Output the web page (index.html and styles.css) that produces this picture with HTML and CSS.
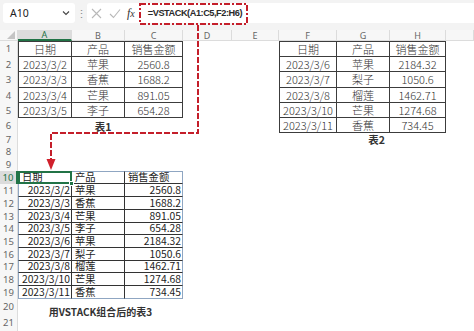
FILE: index.html
```html
<!DOCTYPE html>
<html lang="zh">
<head>
<meta charset="utf-8">
<title>VSTACK</title>
<link rel="stylesheet" href="styles.css">
</head>
<body>
<div class="app">
  <div class="fbar">
    <div class="namebox"><span>A10</span>
      <svg width="8" height="6" viewBox="0 0 8 6"><path d="M1 1.5 L4 4.5 L7 1.5" fill="none" stroke="#444" stroke-width="1.1"/></svg>
    </div>
    <div class="dots">⋮</div>
    <div class="fwrap">
      <svg class="ico" width="11" height="11" viewBox="0 0 11 11"><path d="M1 1 L10 10 M10 1 L1 10" stroke="#b8b8b8" stroke-width="1.1" fill="none"/></svg>
      <svg class="ico" width="12" height="11" viewBox="0 0 12 11"><path d="M1 6 L4.5 9.5 L11 1.5" stroke="#b8b8b8" stroke-width="1.1" fill="none"/></svg>
      <span class="fx">f<span class="fxx">x</span></span>
      <span class="ftext">=VSTACK(A1:C5,F2:H6)</span>
    </div>
  </div>

  <div class="sheet">
    <!-- header row -->
    <span class="corner"><svg width="8" height="8" viewBox="0 0 8 8"><path d="M8 0 V8 H0 Z" fill="#c4c4c4"/></svg></span>
    <span class="ch on">A</span><span class="ch">B</span><span class="ch">C</span><span class="ch">D</span><span class="ch">E</span><span class="ch">F</span><span class="ch">G</span><span class="ch">H</span><span class="ch"></span>

    <!-- row 1 -->
    <span class="rh">1</span>
    <span class="c t top left">日期</span><span class="c t top">产品</span><span class="c t top">销售金额</span>
    <span></span><span></span>
    <span class="c t top left">日期</span><span class="c t top">产品</span><span class="c t top">销售金额</span><span></span>
    <!-- row 2 -->
    <span class="rh">2</span>
    <span class="c t left">2023/3/2</span><span class="c t">苹果</span><span class="c t">2560.8</span>
    <span></span><span></span>
    <span class="c t left">2023/3/6</span><span class="c t">苹果</span><span class="c t">2184.32</span><span></span>
    <!-- row 3 -->
    <span class="rh">3</span>
    <span class="c t left">2023/3/3</span><span class="c t">香蕉</span><span class="c t">1688.2</span>
    <span></span><span></span>
    <span class="c t left">2023/3/7</span><span class="c t">梨子</span><span class="c t">1050.6</span><span></span>
    <!-- row 4 -->
    <span class="rh">4</span>
    <span class="c t left">2023/3/4</span><span class="c t">芒果</span><span class="c t">891.05</span>
    <span></span><span></span>
    <span class="c t left">2023/3/8</span><span class="c t">榴莲</span><span class="c t">1462.71</span><span></span>
    <!-- row 5 -->
    <span class="rh">5</span>
    <span class="c t left">2023/3/5</span><span class="c t">李子</span><span class="c t">654.28</span>
    <span></span><span></span>
    <span class="c t left">2023/3/10</span><span class="c t">芒果</span><span class="c t">1274.68</span><span></span>
    <!-- row 6 -->
    <span class="rh">6</span>
    <span class="cap cap1">表1</span>
    <span></span><span></span>
    <span class="c t left">2023/3/11</span><span class="c t">香蕉</span><span class="c t">734.45</span><span></span>
    <!-- row 7 -->
    <span class="rh">7</span>
    <span></span><span></span><span></span><span></span><span></span>
    <span class="cap cap2">表2</span><span></span>
    <!-- row 8 -->
    <span class="rh">8</span>
    <span></span><span></span><span></span><span></span><span></span><span></span><span></span><span></span><span></span>
    <!-- row 9 -->
    <span class="rh">9</span>
    <span></span><span></span><span></span><span></span><span></span><span></span><span></span><span></span><span></span>
    <!-- row 10 -->
    <span class="rh on">10</span>
    <span class="c u top left l a10">日期<span class="sel"><span class="handle"></span></span></span><span class="c u top l">产品</span><span class="c u top right l">销售金额</span>
    <span></span><span></span><span></span><span></span><span></span><span></span>
    <!-- row 11 -->
    <span class="rh">11</span>
    <span class="c u left r">2023/3/2</span><span class="c u l">苹果</span><span class="c u right r">2560.8</span>
    <span></span><span></span><span></span><span></span><span></span><span></span>
    <!-- row 12 -->
    <span class="rh">12</span>
    <span class="c u left r">2023/3/3</span><span class="c u l">香蕉</span><span class="c u right r">1688.2</span>
    <span></span><span></span><span></span><span></span><span></span><span></span>
    <!-- row 13 -->
    <span class="rh">13</span>
    <span class="c u left r">2023/3/4</span><span class="c u l">芒果</span><span class="c u right r">891.05</span>
    <span></span><span></span><span></span><span></span><span></span><span></span>
    <!-- row 14 -->
    <span class="rh">14</span>
    <span class="c u left r">2023/3/5</span><span class="c u l">李子</span><span class="c u right r">654.28</span>
    <span></span><span></span><span></span><span></span><span></span><span></span>
    <!-- row 15 -->
    <span class="rh">15</span>
    <span class="c u left r">2023/3/6</span><span class="c u l">苹果</span><span class="c u right r">2184.32</span>
    <span></span><span></span><span></span><span></span><span></span><span></span>
    <!-- row 16 -->
    <span class="rh">16</span>
    <span class="c u left r">2023/3/7</span><span class="c u l">梨子</span><span class="c u right r">1050.6</span>
    <span></span><span></span><span></span><span></span><span></span><span></span>
    <!-- row 17 -->
    <span class="rh">17</span>
    <span class="c u left r">2023/3/8</span><span class="c u l">榴莲</span><span class="c u right r">1462.71</span>
    <span></span><span></span><span></span><span></span><span></span><span></span>
    <!-- row 18 -->
    <span class="rh">18</span>
    <span class="c u left r">2023/3/10</span><span class="c u l">芒果</span><span class="c u right r">1274.68</span>
    <span></span><span></span><span></span><span></span><span></span><span></span>
    <!-- row 19 -->
    <span class="rh">19</span>
    <span class="c u left bot r">2023/3/11</span><span class="c u bot l">香蕉</span><span class="c u right bot r">734.45</span>
    <span></span><span></span><span></span><span></span><span></span><span></span>
    <!-- row 20 -->
    <span class="rh">20</span>
    <span class="cap cap3">用VSTACK组合后的表3</span>
    <span></span><span></span><span></span><span></span><span></span><span></span>
    <!-- row 21 -->
    <span class="rh">21</span>
    <span></span><span></span><span></span><span></span><span></span><span></span><span></span><span></span><span></span>
  </div>

  <svg class="annot" width="474" height="331" viewBox="0 0 474 331">
    <rect x="140" y="4" width="107" height="20" fill="none" stroke="#c41e2a" stroke-width="2" stroke-dasharray="6 2 2 2"/>
    <path d="M198 25 V133 H51 V159" fill="none" stroke="#c41e2a" stroke-width="2" stroke-dasharray="6 2"/>
    <polygon points="46.5,159 55.5,159 51,170" fill="#d0202c"/>
  </svg>
</div>
</body>
</html>
```
FILE: styles.css
```css
html, body {
  margin: 0;
  padding: 0;
  background: #ffffff;
}

.app {
  position: relative;
  width: 474px;
  height: 331px;
  overflow: hidden;
  font-family: "Noto Sans CJK SC", "Noto Sans", sans-serif;
  color: #333;
}

/* formula bar */
.fbar {
  height: 30px;
  box-sizing: border-box;
  background: #f3f3f3;
  display: flex;
  align-items: flex-start;
  padding: 3px 0 0 3px;
}

.namebox {
  width: 72px;
  height: 20px;
  box-sizing: border-box;
  background: #fff;
  border-radius: 3px;
  display: flex;
  align-items: center;
  justify-content: space-between;
  padding: 0 5px 0 7px;
  font-family: "Noto Sans", sans-serif;
  font-size: 10.5px;
  color: #222;
}

.dots {
  width: 12px;
  height: 20px;
  line-height: 20px;
  text-align: center;
  color: #8a8a8a;
  font-size: 11px;
}

.fwrap {
  flex: 1;
  height: 20px;
  background: #fff;
  border-radius: 3px 0 0 3px;
  display: flex;
  align-items: center;
  padding-left: 3px;
}

.ico {
  margin-left: 1px;
  margin-right: 6px;
}

.fx {
  font-family: "Liberation Serif", serif;
  font-style: italic;
  font-size: 12px;
  color: #333;
  margin-left: 0;
}

.fxx {
  font-size: 10px;
}

.ftext {
  margin-left: 13px;
  font-family: "Liberation Sans", sans-serif;
  font-size: 9.2px;
  font-weight: 700;
  color: #2a2a2a;
  letter-spacing: -0.45px;
}

/* sheet grid */
.sheet {
  display: grid;
  grid-template-columns: 18px 54px 53px 58px 49px 47px 58px 53px 56px 28px;
  grid-template-rows: 11px 16px 15px 16px 15px 15px 15px 13px 12px 13px 13px 13px 13px 13px 12px 13px 13px 12px 13px 13px 16px 16px;
  font-size: 11px;
}

.sheet > span {
  box-sizing: border-box;
  min-width: 0;
}

.corner {
  background: #f7f7f7;
  border-right: 1px solid #dcdcdc;
  border-bottom: 1px solid #dcdcdc;
  display: flex;
  align-items: flex-end;
  justify-content: flex-end;
  padding: 0 2px 1px 0;
}

.ch {
  background: #f7f7f7;
  border-right: 1px solid #dcdcdc;
  border-bottom: 1px solid #dcdcdc;
  font-family: "Noto Sans", sans-serif;
  font-size: 9px;
  color: #666;
  display: flex;
  align-items: center;
  justify-content: center;
  line-height: 1;
}

.ch.on {
  background: #dcdcdc;
  color: #1e7145;
  border-bottom: 2px solid #217346;
}

.rh {
  background: #f7f7f7;
  border-right: 1px solid #dcdcdc;
  font-family: "Noto Sans", sans-serif;
  font-size: 9.5px;
  color: #666;
  display: flex;
  align-items: center;
  justify-content: center;
  line-height: 1;
}

.rh.on {
  background: #dcdcdc;
  color: #1e7145;
  border-right: 2px solid #217346;
}

.c {
  display: flex;
  align-items: center;
  justify-content: center;
  line-height: 1;
  white-space: nowrap;
  color: #333;
}

/* tables 1 & 2 */
.t {
  font-weight: 300;
  border-right: 1px solid #3c3c3c;
  border-bottom: 1px solid #3c3c3c;
}
.t.top { border-top: 1px solid #3c3c3c; }
.t.left { border-left: 1px solid #3c3c3c; }

/* table 3 */
.u {
  font-size: 10.3px;
  border-right: 1px solid #333;
  border-bottom: 1px solid #333;
  color: #222;
}
.u.top { border-top: 1px solid #8fa6c2; }
.u.left { border-left: 1px solid #8fa6c2; }
.u.right { border-right-color: #8fa6c2; }
.u.bot { border-bottom-color: #8fa6c2; }

.l { justify-content: flex-start; padding-left: 3px; }
.r { justify-content: flex-end; padding-right: 1px; }

.a10 { position: relative; }

.sel {
  position: absolute;
  left: -1px;
  top: -1px;
  right: -1px;
  bottom: -1px;
  border: 2px solid #217346;
}

.handle {
  position: absolute;
  right: -4px;
  bottom: -4px;
  width: 5px;
  height: 5px;
  background: #217346;
  border: 1px solid #fff;
  box-sizing: border-box;
}

/* captions */
.cap {
  grid-column: span 3;
  display: flex;
  justify-content: center;
  align-items: center;
  font-weight: 700;
  color: #333;
  line-height: 1;
}

.cap1 { font-size: 10.5px; padding-left: 5px; padding-top: 3px; }
.cap2 { font-size: 10.5px; padding-left: 28px; padding-top: 2px; }
.cap3 { font-size: 10px; padding-top: 9px; }

/* annotation overlay */
.annot {
  position: absolute;
  left: 0;
  top: 0;
  pointer-events: none;
}
```
